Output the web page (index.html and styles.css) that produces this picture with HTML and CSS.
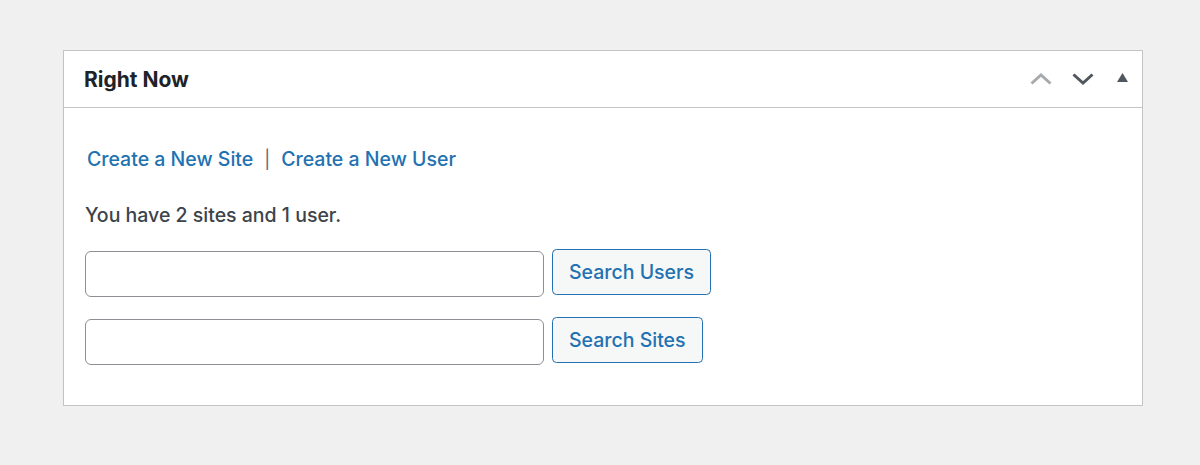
FILE: index.html
```html
<!DOCTYPE html>
<html>
<head>
<meta charset="utf-8">
<link rel="stylesheet" href="styles.css">
</head>
<body>
<div class="postbox">
  <div class="postbox-header">
    <h2 class="hndle">Right Now</h2>
    <div class="handle-actions">
      <span class="icon icon-up"><svg width="22" height="12" viewBox="0 0 22 12"><polyline points="1.5,10.5 11,2 20.5,10.5" fill="none" stroke="#a7aaad" stroke-width="3"/></svg></span>
      <span class="icon icon-down"><svg width="22" height="12" viewBox="0 0 22 12"><polyline points="1.5,1.5 11,10 20.5,1.5" fill="none" stroke="#50575e" stroke-width="3"/></svg></span>
      <span class="icon icon-toggle"><svg width="11" height="9" viewBox="0 0 11 9"><polygon points="5.5,0 11,9 0,9" fill="#50575e"/></svg></span>
    </div>
  </div>
  <div class="inside">
    <p class="links"><a href="#">Create a New Site</a><span class="sep">|</span><a href="#">Create a New User</a></p>
    <p class="count">You have 2 sites and 1 user.</p>
    <form class="search-row">
      <input type="search" class="field">
      <button type="button" class="button">Search Users</button>
    </form>
    <form class="search-row row-sites">
      <input type="search" class="field">
      <button type="button" class="button">Search Sites</button>
    </form>
  </div>
</div>
</body>
</html>
```

FILE: styles.css
```css
html, body {
  margin: 0;
  padding: 0;
  background: #f0f0f1;
  font-family: Inter, "Liberation Sans", Arial, sans-serif;
  color: #3c434a;
}
body {
  padding: 50px 0 0 63px;
}
.postbox {
  box-sizing: border-box;
  width: 1080px;
  height: 356px;
  background: #fff;
  border: 1px solid #c3c4c7;
  box-shadow: 0 1px 1px rgba(0,0,0,0.04);
}
.postbox-header {
  box-sizing: border-box;
  height: 57px;
  border-bottom: 1px solid #c3c4c7;
  display: flex;
  align-items: center;
  justify-content: space-between;
  padding: 0 14px 0 20px;
}
.hndle {
  margin: 0;
  font-size: 21px;
  font-weight: 700;
  color: #1d2327;
}
.handle-actions {
  display: flex;
  align-items: center;
}
.icon {
  display: flex;
  align-items: center;
  justify-content: center;
  height: 24px;
}
.icon-up { width: 22px; margin-right: 20px; }
.icon-down { width: 22px; margin-right: 23px; }
.icon-toggle { width: 11px; padding-bottom: 3px; }
.inside {
  padding: 38px 0 0 21px;
}
.links {
  margin: 0 0 0 2px;
  font-size: 19.5px;
  font-weight: 500;
  line-height: 27px;
  display: flex;
  align-items: center;
}
.links a {
  color: #2271b1;
  text-decoration: none;
}
.sep {
  color: #646970;
  margin: 0 11px;
  font-size: 18px;
  font-weight: 400;
}
.count {
  margin: 29px 0 0;
  font-size: 19.5px;
  font-weight: 500;
  line-height: 27px;
}
.search-row {
  display: flex;
  align-items: center;
  margin: 22px 0 0;
  gap: 8px;
}
.row-sites {
  margin-top: 22px;
}
.field {
  box-sizing: border-box;
  width: 459px;
  height: 46px;
  border: 1.5px solid #8c8f94;
  border-radius: 6px;
  background: #fff;
  margin: 0;
  padding: 0 12px;
  font: inherit;
}
.button {
  box-sizing: border-box;
  height: 46px;
  margin: -4px 0 0;
  padding: 0 16px;
  border: 1.5px solid #2271b1;
  border-radius: 4.5px;
  background: #f6f7f7;
  color: #2271b1;
  font-family: Inter, "Liberation Sans", Arial, sans-serif;
  font-size: 19.5px;
  font-weight: 500;
}
```
